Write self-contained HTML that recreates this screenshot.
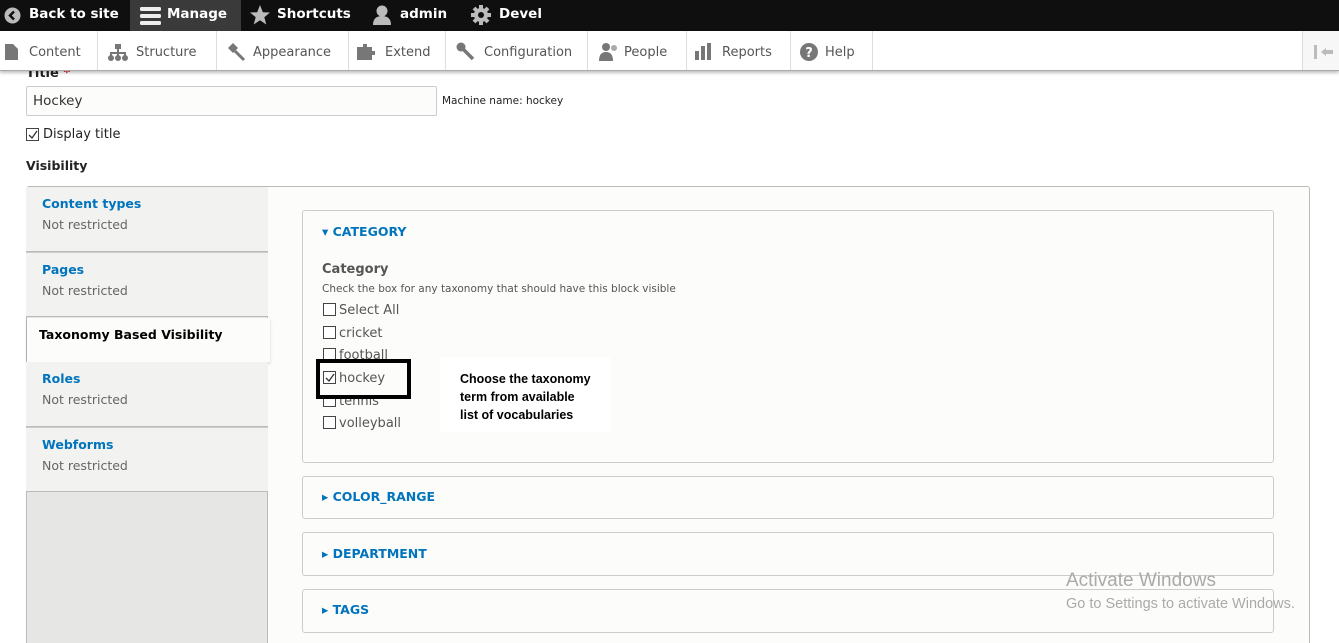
<!DOCTYPE html>
<html style="width:1339px;height:643px;overflow:hidden"><head><meta charset="utf-8"><style>
*{box-sizing:border-box;margin:0;padding:0}
body{width:1339px;height:643px;overflow:hidden;background:#fff;font-family:"DejaVu Sans","Liberation Sans",sans-serif;color:#333;position:relative}
.tb{position:absolute;left:0;top:0;width:1339px;height:31px;background:#0f0f0f;color:#fff;font-weight:bold;font-size:13.5px}
.tb div{position:absolute;top:0;height:31px;line-height:29px}
.tray{position:absolute;left:0;top:31px;width:1339px;height:40px;background:#fff;border-bottom:1px solid #aaa;box-shadow:0 2px 3px rgba(0,0,0,.25);z-index:2;font-size:13px;color:#555}
.tray div{position:absolute;top:0;height:39px;line-height:44px;border-right:1px solid #ddd}
.ic{fill:#777}
.a{position:absolute}
.cb{position:absolute;width:13px;height:13px;border:1px solid #444;background:#fff}
.lt{position:absolute;left:26px;width:242px;background:#f2f2f0;border-bottom:1px solid #bbb}
.lt b{position:absolute;left:16px;top:9px;color:#0074bd;font-size:12.5px}
.lt span{position:absolute;left:16px;top:30px;color:#666;font-size:12.5px}
.det{position:absolute;left:302px;width:972px;border:1px solid #ccc;border-radius:3px;background:#fcfcfa}
.det .h{position:absolute;left:19px;color:#0074bd;font-weight:bold;font-size:12.5px}
.opt{position:absolute;left:322px;font-size:13px;color:#555}
</style></head><body>
<div class="tb">
<div style="left:0;width:125px"><svg class="a" style="left:4px;top:7px" width="17" height="17"><circle cx="8.5" cy="8.5" r="8" fill="#bbb"/><path d="M10 4.5L6 8.5L10 12.5" stroke="#0f0f0f" stroke-width="2.4" fill="none"/></svg><span style="position:absolute;left:29px">Back to site</span></div>
<div style="left:130px;width:111px;background:#3a3a3a"><svg class="a" style="left:10px;top:6px" width="21" height="19"><rect y="1" width="21" height="4" rx="1.5" fill="#eee"/><rect y="8" width="21" height="4" rx="1.5" fill="#eee"/><rect y="15" width="21" height="4" rx="1.5" fill="#eee"/></svg><span style="position:absolute;left:37px">Manage</span></div>
<div style="left:249px;width:110px"><svg class="a" style="left:0;top:4px" width="22" height="22"><path d="M11 1L13.8 8.2L21 8.5L15.3 13.2L17.3 20.5L11 16.3L4.7 20.5L6.7 13.2L1 8.5L8.2 8.2Z" fill="#bbb"/></svg><span style="position:absolute;left:28px">Shortcuts</span></div>
<div style="left:372px;width:90px"><svg class="a" style="left:0;top:4px" width="20" height="22"><circle cx="10" cy="7" r="5.5" fill="#bbb"/><path d="M1 21Q1 12 10 12Q19 12 19 21Z" fill="#bbb"/></svg><span style="position:absolute;left:28px">admin</span></div>
<div style="left:471px;width:80px"><svg class="a" style="left:0;top:5px" width="20" height="20"><circle cx="10" cy="10" r="7" fill="#bbb"/><path d="M10 0V20M0 10H20M3 3L17 17M17 3L3 17" stroke="#bbb" stroke-width="4"/><circle cx="10" cy="10" r="3" fill="#0f0f0f"/></svg><span style="position:absolute;left:28px">Devel</span></div>
</div>
<div class="tray">
<div style="left:0;width:98px"><svg class="a" style="left:5px;top:13px" width="13" height="16"><path d="M0 0H8L13 5V16H0Z" class="ic"/></svg><span style="position:absolute;left:29px">Content</span></div>
<div style="left:98px;width:119px"><svg class="a" style="left:10px;top:13px" width="20" height="17"><rect x="7" y="0" width="6" height="5" class="ic"/><path d="M10 5V10M3 13V9H17V13M10 9V13" stroke="#777" stroke-width="2" fill="none"/><circle cx="3" cy="14" r="3" class="ic"/><circle cx="10" cy="14" r="3" class="ic"/><circle cx="17" cy="14" r="3" class="ic"/></svg><span style="position:absolute;left:38px">Structure</span></div>
<div style="left:217px;width:132px"><svg class="a" style="left:9px;top:11px" width="20" height="20"><path d="M2 6L7 1L12 6L7 11Z" class="ic"/><path d="M9 9L18 18" stroke="#777" stroke-width="3"/></svg><span style="position:absolute;left:36px">Appearance</span></div>
<div style="left:349px;width:97px"><svg class="a" style="left:8px;top:12px" width="20" height="18"><path d="M0 4H6V1H10V4H15V8H18V12H15V17H0Z" class="ic"/></svg><span style="position:absolute;left:36px">Extend</span></div>
<div style="left:446px;width:142px"><svg class="a" style="left:10px;top:11px" width="20" height="20"><path d="M3 3L8 8M8 8L17 17" stroke="#777" stroke-width="3.5"/><circle cx="5" cy="5" r="4.5" class="ic"/></svg><span style="position:absolute;left:38px">Configuration</span></div>
<div style="left:588px;width:99px"><svg class="a" style="left:10px;top:11px" width="22" height="20"><circle cx="8" cy="5" r="4" class="ic"/><path d="M1 19Q1 10 8 10Q15 10 15 19Z" class="ic"/><circle cx="16" cy="6" r="3" fill="#aaa"/></svg><span style="position:absolute;left:36px">People</span></div>
<div style="left:687px;width:104px"><svg class="a" style="left:8px;top:12px" width="18" height="17"><rect x="0" y="8" width="4" height="9" class="ic"/><rect x="6" y="3" width="4" height="14" class="ic"/><rect x="12" y="0" width="4" height="17" class="ic"/></svg><span style="position:absolute;left:35px">Reports</span></div>
<div style="left:791px;width:82px"><svg class="a" style="left:9px;top:12px" width="18" height="18"><circle cx="9" cy="9" r="9" class="ic"/><text x="9" y="14" font-size="13" font-weight="bold" text-anchor="middle" fill="#fff" font-family="DejaVu Sans">?</text></svg><span style="position:absolute;left:34px">Help</span></div>
<div style="left:1302px;width:37px;border-left:1px solid #ddd;border-right:0;background:#f7f7f7"><svg class="a" style="left:11px;top:13px" width="20" height="16"><rect x="0" y="1" width="3" height="14" fill="#bbb"/><path d="M7 8L12 4V6H19V10H12V12Z" fill="#bbb"/></svg></div>
</div>
<div class="a" style="left:26px;top:66px;font-weight:bold;font-size:13px;color:#222">Title <span style="color:#e00">*</span></div>
<div class="a" style="left:26px;top:86px;width:411px;height:30px;border:1px solid #ccc;border-radius:2px;background:#fcfcfa;font-size:13.5px;padding:6px 6px;color:#333">Hockey</div>
<div class="a" style="left:442px;top:95px;font-size:10.5px;color:#222">Machine name: hockey</div>
<div class="cb" style="left:26px;top:128px"></div><svg class="a" style="left:27px;top:129px" width="12" height="12"><path d="M2 6L5 9L10 2" stroke="#333" stroke-width="1.3" fill="none"/></svg>
<div class="a" style="left:43px;top:127px;font-size:13px;color:#222">Display title</div>
<div class="a" style="left:26px;top:158px;font-size:12.5px;font-weight:bold;color:#222">Visibility</div>
<div class="a" style="left:26px;top:186px;width:1284px;height:470px;border:1px solid #bbb;border-radius:3px;background:#fcfcfa"></div>
<div class="a" style="left:27px;top:187px;width:241px;height:460px;background:#e6e6e4;border-right:1px solid #bbb"></div>
<div class="lt" style="top:187px;height:65px"><b>Content types</b><span>Not restricted</span></div>
<div class="lt" style="top:252px;height:65px;border-top:1px solid #ccc"><b>Pages</b><span>Not restricted</span></div>
<div class="a" style="left:27px;top:318px;width:243px;height:44px;background:#fcfcfa;box-shadow:0 2px 3px rgba(0,0,0,.15);font-weight:bold;font-size:12.5px;color:#000;padding:9px 12px">Taxonomy Based Visibility</div>
<div class="lt" style="top:362px;height:65px"><b>Roles</b><span>Not restricted</span></div>
<div class="lt" style="top:427px;height:65px;border-top:1px solid #ccc"><b>Webforms</b><span>Not restricted</span></div>
<div class="det" style="top:210px;height:253px"><div class="h" style="top:13px">▾ CATEGORY</div></div>
<div class="a" style="left:322px;top:262px;font-size:13px;font-weight:bold;color:#555">Category</div>
<div class="a" style="left:322px;top:283px;font-size:10.5px;color:#555">Check the box for any taxonomy that should have this block visible</div>
<div class="cb" style="left:323px;top:303px"></div><div class="opt" style="left:339px;top:303px">Select All</div>
<div class="cb" style="left:323px;top:326px"></div><div class="opt" style="left:339px;top:326px">cricket</div>
<div class="cb" style="left:323px;top:348px"></div><div class="opt" style="left:339px;top:348px">football</div>
<div class="cb" style="left:323px;top:394px"></div><div class="opt" style="left:339px;top:394px">tennis</div>
<div class="cb" style="left:323px;top:416px"></div><div class="opt" style="left:339px;top:416px">volleyball</div>
<div class="a" style="left:316px;top:359px;width:95px;height:40px;border:4px solid #000;background:#fcfcfa"></div>
<div class="cb" style="left:323px;top:371px"></div><svg class="a" style="left:324px;top:372px" width="12" height="12"><path d="M2 6L5 9L10 2" stroke="#333" stroke-width="1.3" fill="none"/></svg><div class="opt" style="left:339px;top:371px">hockey</div>
<div class="a" style="left:440px;top:357px;width:170px;height:75px;background:#fff"></div>
<div class="a" style="left:460px;top:370px;font-size:12.5px;font-weight:bold;color:#000;line-height:18px;font-family:'Liberation Sans',sans-serif">Choose the taxonomy<br>term from available<br>list of vocabularies</div>
<div class="det" style="top:476px;height:43px"><div class="h" style="top:12px">▸ COLOR_RANGE</div></div>
<div class="det" style="top:532px;height:44px"><div class="h" style="top:13px">▸ DEPARTMENT</div></div>
<div class="det" style="top:589px;height:44px"><div class="h" style="top:12px">▸ TAGS</div></div>
<div class="a" style="left:1066px;top:570px;font-size:19px;color:#aaa;font-family:'Liberation Sans',sans-serif">Activate Windows</div>
<div class="a" style="left:1066px;top:596px;font-size:14.5px;color:#aaa;font-family:'Liberation Sans',sans-serif">Go to Settings to activate Windows.</div>
</body></html>
